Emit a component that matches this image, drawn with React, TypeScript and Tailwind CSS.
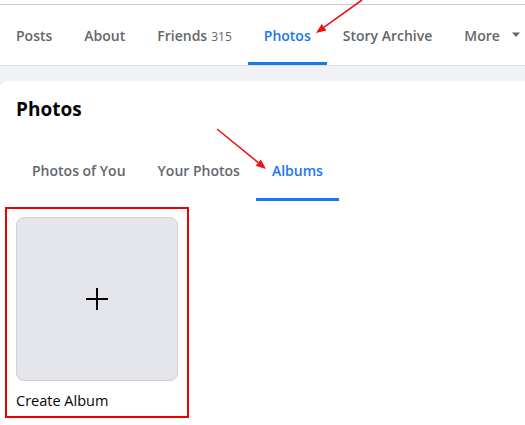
import React from "react";

const navTabs = [
  { label: "Posts" },
  { label: "About" },
  { label: "Friends", count: "315" },
  { label: "Photos", active: true },
  { label: "Story Archive" },
];

const subTabs = [
  { label: "Photos of You" },
  { label: "Your Photos" },
  { label: "Albums", active: true },
];

function Arrow({ x1, y1, x2, y2 }: { x1: number; y1: number; x2: number; y2: number }) {
  // red annotation arrow, head at (x2, y2)
  const a = Math.atan2(y2 - y1, x2 - x1);
  const len = 10;
  const w = 4;
  const bx = x2 - len * Math.cos(a);
  const by = y2 - len * Math.sin(a);
  const p1 = `${bx + w * Math.sin(a)},${by - w * Math.cos(a)}`;
  const p2 = `${bx - w * Math.sin(a)},${by + w * Math.cos(a)}`;
  return (
    <g>
      <line x1={x1} y1={y1} x2={bx} y2={by} stroke="#ee1111" strokeWidth={1.6} />
      <polygon points={`${x2},${y2} ${p1} ${p2}`} fill="#ee1111" />
    </g>
  );
}

export default function App() {
  return (
    <div
      className="relative w-[525px] h-[425px] overflow-hidden bg-white"
      style={{ fontFamily: '"Segoe UI", "Open Sans", "Noto Sans", sans-serif' }}
    >
      {/* top nav */}
      <div className="h-[4px] bg-white" />
      <div className="border-t border-[#c9ccd1] bg-white">
        <div className="flex h-[60px] items-stretch">
          {navTabs.map((t) => (
            <div key={t.label} className="relative flex items-center px-4">
              <span
                className={`text-[14px] font-semibold whitespace-nowrap ${
                  t.active ? "text-[#1877f2]" : "text-[#65676b]"
                }`}
              >
                {t.label}
                {t.count && <span className="ml-[4px] text-[12px] font-normal">{t.count}</span>}
              </span>
              {t.active && <div className="absolute bottom-0 left-0 right-0 h-[3px] bg-[#1877f2]" />}
            </div>
          ))}
          <div className="flex items-center gap-[11px] px-4">
            <span className="text-[14px] font-semibold text-[#65676b]">More</span>
            <svg width="10" height="6" viewBox="0 0 10 6" className="shrink-0">
              <path d="M1 0.5h8L5 5z" fill="#65676b" />
            </svg>
          </div>
        </div>
      </div>

      {/* gray band + card */}
      <div className="border-t border-[#dddfe2] bg-[#f0f2f5] pt-[15px]">
        <div className="rounded-tl-lg bg-white px-4 pt-[15px] h-[344px]">
          <h2 className="text-[19px] font-bold leading-[26px] text-[#050505]">Photos</h2>

          <div className="mt-[18px] flex h-[61px] items-stretch">
            {subTabs.map((t) => (
              <div key={t.label} className="relative flex items-center px-4">
                <span
                  className={`text-[14px] font-semibold whitespace-nowrap ${
                    t.active ? "text-[#1877f2]" : "text-[#65676b]"
                  }`}
                >
                  {t.label}
                </span>
                {t.active && <div className="absolute bottom-0 left-0 right-0 h-[3px] bg-[#1877f2]" />}
              </div>
            ))}
          </div>

          <div className="ml-[-11px] mt-[6px] w-[184px] border-2 border-[#ee0000] px-[9px] pt-[8px] pb-[6px]">
            <div className="flex h-[164px] w-[162px] items-center justify-center rounded-lg border border-[#ced0d4] bg-[#e4e6eb]">
              <svg width="22" height="22" viewBox="0 0 22 22">
                <path d="M11 0v22M0 11h22" stroke="#050505" strokeWidth="2" />
              </svg>
            </div>
            <div className="mt-[11px] text-[14.5px] leading-[18px] text-[#050505]">Create Album</div>
          </div>
        </div>
      </div>

      {/* annotation arrows */}
      <svg className="pointer-events-none absolute left-0 top-0" width="525" height="425">
        <Arrow x1={362} y1={0} x2={316} y2={33} />
        <Arrow x1={217} y1={129} x2={266} y2={169} />
      </svg>
    </div>
  );
}
